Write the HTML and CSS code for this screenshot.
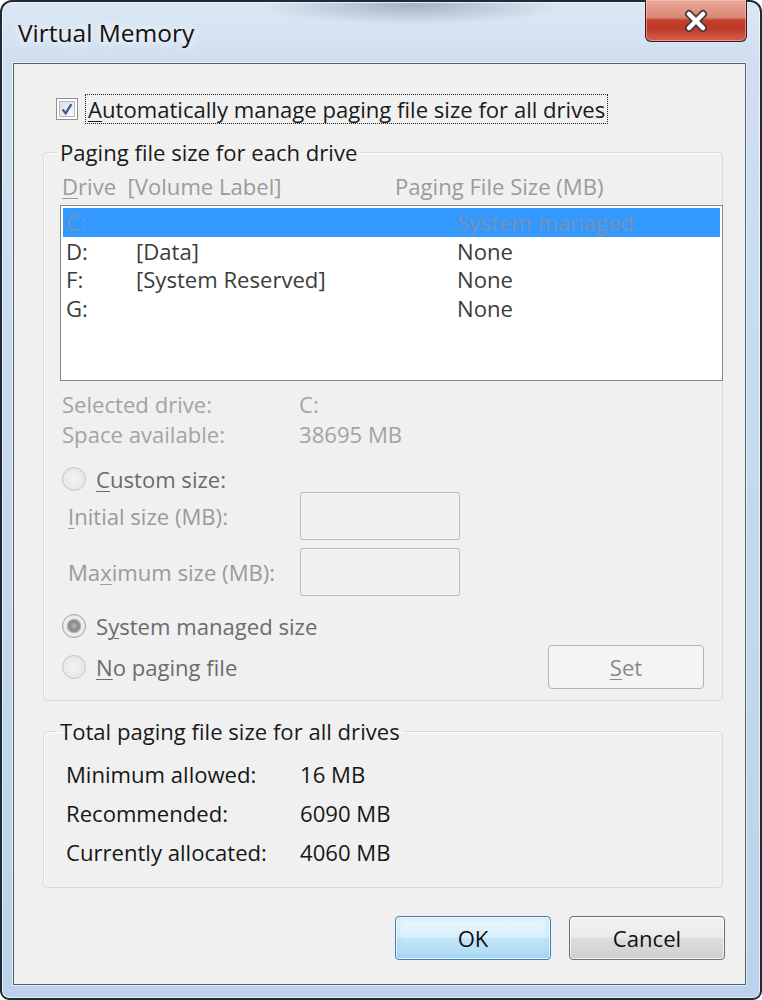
FILE: index.html
```html
<!DOCTYPE html>
<html lang="en">
<head>
    <meta charset="UTF-8">
    <meta name="viewport" content="width=device-width, initial-scale=1.0">
    <title>Virtual Memory</title>

    <link rel="stylesheet" href="styles.css">

</head>
<body>

    <div class="window">

        <div class="title-bar">
            <span class="title">Virtual Memory</span>
            <div class="close-btn">
                <svg width="30" height="24" viewBox="0 0 30 24">
                    <path d="M8 5 L22 19 M22 5 L8 19" stroke="#4a3a3a" stroke-width="8" stroke-linecap="round" fill="none"/>
                    <path d="M8 5 L22 19 M22 5 L8 19" stroke="#ffffff" stroke-width="4.5" stroke-linecap="round" fill="none"/>
                </svg>
            </div>
        </div>

        <div class="client">

            <div class="auto-row">
                <span class="checkbox">
                    <svg width="16" height="16" viewBox="0 0 16 16">
                        <path d="M3 8.5 L6.5 13 L13 2.5" stroke="#3f5690" stroke-width="2.6" fill="none"/>
                    </svg>
                </span>
                <span class="focus-rect"><u>A</u>utomatically manage paging file size for all drives</span>
            </div>

            <fieldset class="group drives">
                <legend>Paging file size for each drive</legend>

                <div class="list-head">
                    <span><u>D</u>rive&nbsp; [Volume Label]</span>
                    <span>Paging File Size (MB)</span>
                </div>

                <div class="listbox">
                    <div class="row selected"><span>C:</span><span></span><span>System managed</span></div>
                    <div class="row"><span>D:</span><span>[Data]</span><span>None</span></div>
                    <div class="row"><span>F:</span><span>[System Reserved]</span><span>None</span></div>
                    <div class="row"><span>G:</span><span></span><span>None</span></div>
                </div>

                <div class="info">
                    <span>Selected drive:</span><span>C:</span>
                    <span>Space available:</span><span>38695 MB</span>
                </div>

                <div class="radio-row custom">
                    <span class="radio"></span>
                    <span><u>C</u>ustom size:</span>
                </div>

                <div class="size-row">
                    <span class="size-label"><u>I</u>nitial size (MB):</span>
                    <span class="textbox"></span>
                </div>

                <div class="size-row second">
                    <span class="size-label">Ma<u>x</u>imum size (MB):</span>
                    <span class="textbox"></span>
                </div>

                <div class="radio-row managed">
                    <span class="radio checked"></span>
                    <span>S<u>y</u>stem managed size</span>
                </div>

                <div class="radio-row none">
                    <div class="radio-pair">
                        <span class="radio"></span>
                        <span><u>N</u>o paging file</span>
                    </div>
                    <div class="btn set"><u>S</u>et</div>
                </div>
            </fieldset>

            <fieldset class="group totals">
                <legend>Total paging file size for all drives</legend>

                <div class="totals-grid">
                    <span>Minimum allowed:</span><span>16 MB</span>
                    <span>Recommended:</span><span>6090 MB</span>
                    <span>Currently allocated:</span><span>4060 MB</span>
                </div>
            </fieldset>

            <div class="buttons">
                <div class="btn ok">OK</div>
                <div class="btn cancel">Cancel</div>
            </div>

        </div>

    </div>

</body>
</html>
```

FILE: styles.css
```css
*
{
    margin: 0;
    padding: 0;
    box-sizing: border-box;
}

body
{
    width: 762px;
    height: 1000px;
    background: #ffffff;
    font-family: "Open Sans", "Noto Sans", sans-serif;
    font-size: 22.1px;
    color: #1a1a1a;
}

u
{
    text-decoration-thickness: 1px;
    text-underline-offset: 3px;
}

/* window frame */

.window
{
    width: 762px;
    height: 1000px;
    border: 2px solid #1f2a35;
    border-radius: 12px 12px 9px 9px;
    background:
        radial-gradient(ellipse 150px 20px at 54% 3px, rgba(110, 128, 148, 0.5), transparent),
        linear-gradient(to bottom, #dbe7f4 0, #cfdff0 60px, #bad2eb 100%);
    box-shadow: inset 0 0 0 1px rgba(255, 255, 255, 0.65);
    padding: 0 14px 13px 11px;
    display: flex;
    flex-direction: column;
}

.title-bar
{
    height: 61px;
    display: flex;
    justify-content: space-between;
    align-items: flex-start;
}

.title
{
    margin: 16px 0 0 5px;
    line-height: 30px;
    font-size: 24.5px;
    color: #111;
    text-shadow: 0 0 8px rgba(255, 255, 255, 0.95), 0 0 14px rgba(255, 255, 255, 0.8);
}

.close-btn
{
    width: 102px;
    height: 42px;
    margin: -2px -1px 0 0;
    border: 1px solid #3e1c17;
    border-top: none;
    border-radius: 0 0 6px 6px;
    background: linear-gradient(to bottom, #e9a999 0%, #da8877 42%, #c43f2b 50%, #bd3a27 70%, #d4624f 100%);
    box-shadow: inset 0 0 0 1px rgba(255, 220, 210, 0.45);
    display: flex;
    align-items: center;
    justify-content: center;
}

/* client area */

.client
{
    flex: 1;
    border: 1px solid #55606c;
    background: #f0f0f0;
    box-shadow: 0 0 0 1px rgba(255, 255, 255, 0.6);
}

.auto-row
{
    margin: 30px 0 0 42px;
    height: 30px;
    display: flex;
    align-items: center;
    gap: 7px;
}

.checkbox
{
    width: 22px;
    height: 22px;
    border: 1px solid #8e8f8f;
    background: #fff;
    padding: 2px;
    display: flex;
}

.checkbox svg
{
    width: 16px;
    height: 16px;
    border: 1px solid #b3b8bd;
    background: linear-gradient(135deg, #dde1e6, #f8f8f8);
}

.focus-rect
{
    border: 1px dotted #222;
    padding: 0 2px;
    line-height: 28px;
    white-space: nowrap;
}

/* group boxes */

.group
{
    border: 1px solid #d5dbe0;
    border-radius: 4px;
    box-shadow: inset 1px 1px 0 #fbfbfb;
    margin: 14px 22px 0 29px;
    padding: 6px 0 11px 16px;
    min-width: 0;
}

.group legend
{
    line-height: 28px;
    padding: 0 3px;
    margin-left: -3px;
    color: #1a1a1a;
}

.list-head
{
    display: grid;
    grid-template-columns: 333px 1fr;
    padding-left: 2px;
    line-height: 28px;
    color: #9b9b9b;
}

.listbox
{
    margin: 5px -1px 0 0;
    height: 176px;
    border: 1px solid #828790;
    background: #fff;
    padding: 2px;
}

.row
{
    display: grid;
    grid-template-columns: 70px 321px 1fr;
    height: 28.5px;
    line-height: 28.5px;
    padding-left: 3px;
    color: #3c3c3c;
}

.row.selected
{
    background: #3399ff;
    color: #7492b8;
}

.info
{
    margin-top: 8px;
    display: grid;
    grid-template-columns: 237px 1fr;
    padding-left: 2px;
    line-height: 30px;
    color: #a3a3a3;
}

.radio-row
{
    display: flex;
    align-items: center;
    gap: 10px;
    padding-left: 2px;
    color: #6c6c6c;
}

.radio-row.custom
{
    margin-top: 17px;
    height: 26px;
}

.radio-row.managed
{
    margin-top: 15px;
    height: 30px;
}

.radio-row.none
{
    margin-top: 4px;
    height: 44px;
    justify-content: space-between;
}

.radio-pair
{
    display: flex;
    align-items: center;
    gap: 10px;
}

.radio
{
    width: 24px;
    height: 24px;
    border-radius: 50%;
    border: 1px solid #c6c6c6;
    background: radial-gradient(circle, #f3f3f3 0, #e9e9e9 60%, #dadada 100%);
}

.radio.checked
{
    border-color: #a9a9a9;
    background: radial-gradient(circle, #bdbdbd 0, #8c8c8c 4px, #959595 6px, #e4e4e4 7.5px, #f2f2f2 9px, #d4d4d4 12px);
}

.size-row
{
    display: flex;
    align-items: center;
    padding-left: 8px;
    color: #9a9a9a;
}

.size-row.second
{
    margin-top: 8px;
}

.size-label
{
    width: 232px;
    white-space: nowrap;
}

.textbox
{
    width: 160px;
    height: 48px;
    border: 1px solid #b7b7b7;
    border-radius: 3px;
    background: #f0f0f0;
    box-shadow: inset 0 0 0 1px #fafafa;
}

/* buttons */

.btn
{
    width: 156px;
    height: 44px;
    border-radius: 4px;
    display: flex;
    align-items: center;
    justify-content: center;
}

.btn.set
{
    margin-right: 18px;
    border: 1px solid #b1b5b8;
    background: #f4f4f4;
    color: #8a8a8a;
}

.totals-grid
{
    padding: 4px 0 2px 6px;
    display: grid;
    grid-template-columns: 234px 1fr;
    line-height: 39px;
    color: #161616;
}

.totals
{
    margin-top: 16px;
    padding-bottom: 13px;
}

.buttons
{
    margin: 28px 20px 0 0;
    display: flex;
    justify-content: flex-end;
    gap: 18px;
}

.btn.ok
{
    border: 1px solid #3c7fb1;
    background: linear-gradient(to bottom, #ebf6fd 0%, #daf0fc 48%, #c2e5f9 52%, #abd9f3 100%);
    box-shadow: inset 0 0 0 1px rgba(255, 255, 255, 0.8), inset 0 0 6px rgba(80, 170, 230, 0.35);
    color: #111;
}

.btn.cancel
{
    border: 1px solid #707070;
    background: linear-gradient(to bottom, #f2f2f2 0%, #ebebeb 48%, #dddddd 52%, #cfcfcf 100%);
    box-shadow: inset 0 0 0 1px rgba(255, 255, 255, 0.7);
    color: #111;
}
```
